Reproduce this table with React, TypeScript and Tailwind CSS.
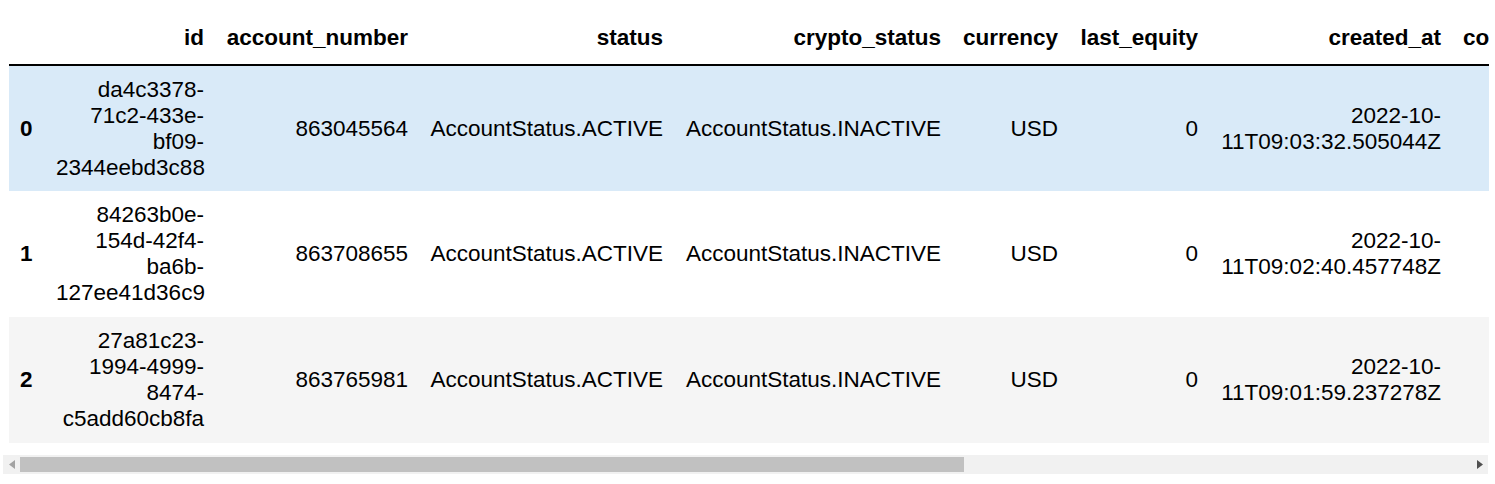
import React from 'react';

type Row = {
  idx: string;
  id: string[];
  accountNumber: string;
  status: string;
  cryptoStatus: string;
  currency: string;
  lastEquity: string;
  createdAt: string[];
  bg: string;
};

const rows: Row[] = [
  {
    idx: '0',
    id: ['da4c3378-', '71c2-433e-', 'bf09-', '2344eebd3c88'],
    accountNumber: '863045564',
    status: 'AccountStatus.ACTIVE',
    cryptoStatus: 'AccountStatus.INACTIVE',
    currency: 'USD',
    lastEquity: '0',
    createdAt: ['2022-10-', '11T09:03:32.505044Z'],
    bg: 'bg-[#d9eaf8]',
  },
  {
    idx: '1',
    id: ['84263b0e-', '154d-42f4-', 'ba6b-', '127ee41d36c9'],
    accountNumber: '863708655',
    status: 'AccountStatus.ACTIVE',
    cryptoStatus: 'AccountStatus.INACTIVE',
    currency: 'USD',
    lastEquity: '0',
    createdAt: ['2022-10-', '11T09:02:40.457748Z'],
    bg: 'bg-white',
  },
  {
    idx: '2',
    id: ['27a81c23-', '1994-4999-', '8474-', 'c5add60cb8fa'],
    accountNumber: '863765981',
    status: 'AccountStatus.ACTIVE',
    cryptoStatus: 'AccountStatus.INACTIVE',
    currency: 'USD',
    lastEquity: '0',
    createdAt: ['2022-10-', '11T09:01:59.237278Z'],
    bg: 'bg-[#f5f5f5]',
  },
];

const headers = ['id', 'account_number', 'status', 'crypto_status', 'currency', 'last_equity', 'created_at'];

export default function App() {
  return (
    <div className="w-[1495px] h-[484px] bg-white text-black font-['Liberation_Sans',Arial,sans-serif] text-[22.5px] leading-[26px] pt-[14px]">
      {/* dataframe output, clipped by the horizontal scroller */}
      <div className="ml-[9px] w-[1480px] overflow-hidden">
        <table className="table-fixed border-collapse w-[1700px]">
          <colgroup>
            <col className="w-[36px]" />
            <col className="w-[170px]" />
            <col className="w-[204px]" />
            <col className="w-[255px]" />
            <col className="w-[278px]" />
            <col className="w-[117px]" />
            <col className="w-[140px]" />
            <col className="w-[243px]" />
            <col className="w-[257px]" />
          </colgroup>
          <thead>
            <tr className="border-b-2 border-black">
              <th className="pt-[11px] pb-[13px]" />
              {headers.map((h) => (
                <th key={h} className="px-[11px] pt-[11px] pb-[13px] text-right font-bold whitespace-nowrap">
                  {h}
                </th>
              ))}
              {/* next column, only its first letters are in view */}
              <th className="px-[11px] pt-[11px] pb-[13px] text-left font-bold whitespace-nowrap">co</th>
            </tr>
          </thead>
          <tbody>
            {rows.map((r) => (
              <tr key={r.idx} className={`${r.bg} h-[126px]`}>
                <th className="pl-[11px] text-left font-bold align-middle">{r.idx}</th>
                <td className="px-[11px] text-right align-middle whitespace-nowrap">
                  {r.id.map((l) => (
                    <div key={l}>{l}</div>
                  ))}
                </td>
                <td className="px-[11px] text-right align-middle">{r.accountNumber}</td>
                <td className="px-[11px] text-right align-middle whitespace-nowrap">{r.status}</td>
                <td className="px-[11px] text-right align-middle whitespace-nowrap">{r.cryptoStatus}</td>
                <td className="px-[11px] text-right align-middle">{r.currency}</td>
                <td className="px-[11px] text-right align-middle">{r.lastEquity}</td>
                <td className="px-[11px] text-right align-middle whitespace-nowrap">
                  {r.createdAt.map((l) => (
                    <div key={l}>{l}</div>
                  ))}
                </td>
                <td />
              </tr>
            ))}
          </tbody>
        </table>
      </div>

      {/* horizontal scrollbar */}
      <div className="ml-[3px] mt-[12px] w-[1485px] h-[19px] bg-[#f1f1f1] flex items-center">
        <div className="w-[17px] h-full flex items-center justify-center">
          <svg width="6" height="9" viewBox="0 0 6 9">
            <path d="M6 0 L0 4.5 L6 9 Z" fill="#a3a3a3" />
          </svg>
        </div>
        <div className="w-[944px] h-[15px] bg-[#c1c1c1]" />
        <div className="flex-1" />
        <div className="w-[17px] h-full flex items-center justify-center">
          <svg width="6" height="9" viewBox="0 0 6 9">
            <path d="M0 0 L6 4.5 L0 9 Z" fill="#505050" />
          </svg>
        </div>
      </div>
    </div>
  );
}
